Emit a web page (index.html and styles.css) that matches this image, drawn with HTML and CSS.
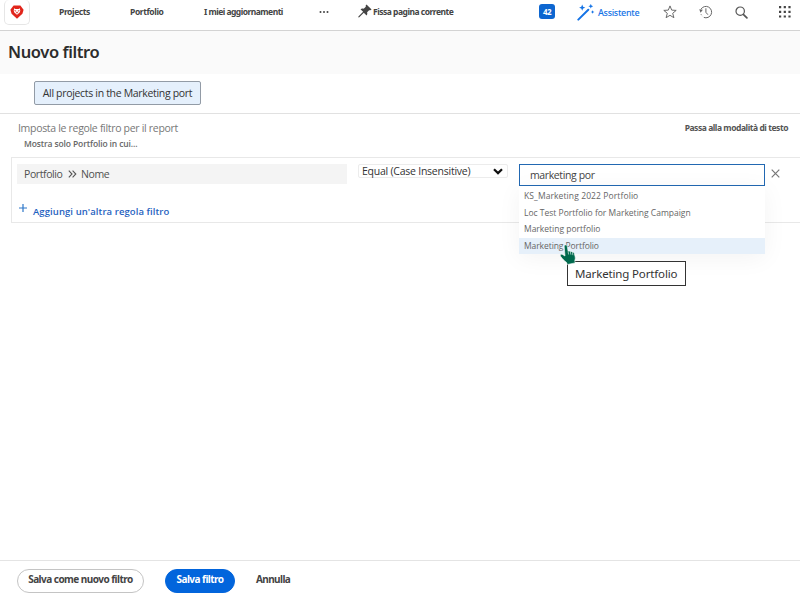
FILE: index.html
```html
<!DOCTYPE html>
<html lang="it">
<head>
    <meta charset="UTF-8">
    <meta name="viewport" content="width=device-width, initial-scale=1.0">
    <title>Nuovo filtro</title>
    <link rel="stylesheet" href="styles.css">
</head>
<body>
<div class="page">
    <header class="topbar">
        <div class="logo">
            <svg width="14" height="14" viewBox="0 0 14 14">
                <path d="M3.600.4h6.800L13.600 4.800 12.400 8.800 7 13.800 1.600 8.800.4 4.800z" fill="#e1251b"/>
                <path d="M4.200 3.200l1.200.7h3.200l1.200-.7.5 2.600-.8 2L7 9.700 4.500 7.800 3.700 5.800z" fill="#fff"/>
                <path d="M4.600 5.500l1.600.7M9.400 5.500l-1.600.7M5.900 8.200L7 7.300l1.100.9" stroke="#e1251b" stroke-width=".9" fill="none"/>
            </svg>
        </div>
        <nav class="links">
            <a class="projects">Projects</a>
            <a class="portfolio">Portfolio</a>
            <a class="updates">I miei aggiornamenti</a>
            <svg class="more" width="10" height="4" viewBox="0 0 10 4" fill="#444"><circle cx="1.500" cy="2" r="1"/><circle cx="5" cy="2" r="1"/><circle cx="8.500" cy="2" r="1"/></svg>
            <a class="pin">
                <svg width="14" height="14" viewBox="0 0 14 14" fill="#444"><path d="M8.500.4l5.100 5.100-1.300.8-1.200-.1-2 2.100c.4 1.300.2 2.300-.5 3.200L5.800 8.700 1 13.500l-.7-.2.1-.8 4.700-4.700L2.500 5.200c.9-.7 2-.9 3.200-.5l2.100-2-.1-1.300z"/></svg>
                <span>Fissa pagina corrente</span>
            </a>
        </nav>
        <div class="tools">
            <span class="badge">42</span>
            <a class="assistant">
                <svg width="18" height="17" viewBox="0 0 18 17" fill="#1473e6">
                    <path d="M1.300 15.600L11.300 5.700" stroke="#1473e6" stroke-width="2" stroke-linecap="round"/>
                    <path d="M5.200.6l.9 2.200 2.200.9-2.200.9-.9 2.200-.9-2.200-2.200-.9 2.200-.9zM13.800-.2l.7 1.700 1.700.7-1.700.7-.7 1.700-.7-1.700-1.700-.7 1.700-.7zM15.600 6.200l.6 1.200 1.200.6-1.200.6-.6 1.200-.6-1.200-1.200-.6 1.200-.6z"/>
                </svg>
                <span>Assistente</span>
            </a>
            <svg class="star" width="14" height="14" viewBox="0 0 14 14" fill="none" stroke="#6a6a6a"><path d="M7 .9l1.700 4.200 4.500.3-3.500 2.900 1.200 4.400L7 10.300l-3.900 2.400 1.200-4.400L.8 5.400l4.500-.3z" stroke-linejoin="round"/></svg>
            <svg class="history" width="14" height="14" viewBox="0 0 14 14" fill="none" stroke="#666"><path d="M2 4.200A5.700 5.700 0 1 1 4.800 12.400M6.900 3.300v4l2 2.400"/><path d="M.3 4.300l3.600.5L1.500 7.800z" fill="#666" stroke="none"/><path d="M2 9.300l1.200 1.800" stroke-dasharray="1 1"/></svg>
            <svg class="search" width="13" height="13" viewBox="0 0 13 13" fill="none" stroke="#555" stroke-width="1.200"><circle cx="5.200" cy="5.200" r="4.200"/><path d="M8.300 8.300l3.600 3.600" stroke-width="1.700" stroke-linecap="round"/></svg>
            <svg class="apps" width="12" height="12" viewBox="0 0 12 12" fill="#444">
                <path d="M0 0h2.200v2.200H0zM4.700 0h2.200v2.200H4.700zM9.400 0h2.200v2.200H9.400zM0 4.700h2.200v2.200H0zM4.700 4.700h2.200v2.200H4.700zM9.400 4.700h2.200v2.200H9.400zM0 9.400h2.200v2.200H0zM4.700 9.400h2.200v2.200H4.700zM9.400 9.400h2.200v2.200H9.400z"/>
            </svg>
        </div>
    </header>

    <h1 class="title"><span>Nuovo filtro</span></h1>

    <div class="tabs">
        <button class="tab"><span>All projects in the Marketing port</span></button>
    </div>

    <main class="content">
        <div class="intro">
            <div>
                <div class="heading"><span>Imposta le regole filtro per il report</span></div>
                <div class="subheading"><span>Mostra solo Portfolio in cui...</span></div>
            </div>
            <a class="text-mode">Passa alla modalità di testo</a>
        </div>

        <section class="rules">
            <div class="rule">
                <div class="field">
                    <span class="field-object">Portfolio</span>
                    <svg width="9" height="8" viewBox="0 0 9 8" fill="none" stroke="#555" stroke-width="1.100"><path d="M.8.700L4 4 .8 7.300M4.600.700L7.800 4 4.600 7.300"/></svg>
                    <span class="field-name">Nome</span>
                </div>
                <div class="operator">
                    <span>Equal (Case Insensitive)</span>
                    <svg width="10" height="7" viewBox="0 0 10 7" fill="none" stroke="#111" stroke-width="2.200"><path d="M1 1.200l4 3.900 4-3.900"/></svg>
                </div>
                <div class="value">
                    <div class="value-input"><span>marketing por</span></div>
                    <ul class="suggestions">
                        <li class="wide"><span>KS_Marketing 2022 Portfolio</span></li>
                        <li><span>Loc Test Portfolio for Marketing Campaign</span></li>
                        <li><span>Marketing portfolio</span></li>
                        <li class="selected"><span>Marketing Portfolio</span></li>
                    </ul>
                    <div class="tooltip"><span>Marketing Portfolio</span></div>
                    <svg class="cursor" width="17" height="21" viewBox="0 0 17 21"><path d="M5 1.100C6 .6 7 1.100 7.200 2.200l.9 5.100c.9-.7 1.800-.4 2.200.4.900-.5 1.700-.1 2 .7.900-.3 1.800.1 2 1l.9 3.600c.3 1.300 0 2.500-.4 3.400l.3 2.500-7.600 1.600-1.100-2.200c-1.900-1.200-4-3.600-5.700-5.800-.9-1.300 0-2.600 1.400-2.200l2.900 1.700L4.200 2.700c-.1-.7.200-1.300.8-1.600z" fill="#00694d" stroke="#fff" stroke-width=".6"/><path d="M8.100 7.500l.5 3M10.400 8l.5 2.700M12.500 9l.4 2.200" stroke="#d6ebe4" stroke-width=".7"/></svg>
                </div>
                <svg class="remove" width="9" height="9" viewBox="0 0 9 9" stroke="#777" stroke-width="1.200"><path d="M.7.700l7.600 7.600M8.300.700L.7 8.300"/></svg>
            </div>
            <a class="add-rule">
                <svg width="8" height="8" viewBox="0 0 8 8" stroke="#2d77c9" stroke-width="1.200"><path d="M4 0v8M0 4h8"/></svg>
                <span>Aggiungi un'altra regola filtro</span>
            </a>
        </section>
    </main>

    <footer class="footer">
        <button class="btn save-new"><span>Salva come nuovo filtro</span></button>
        <button class="btn save"><span>Salva filtro</span></button>
        <a class="cancel">Annulla</a>
    </footer>
</div>
</body>
</html>
```
FILE: styles.css
```css
* {
    box-sizing: border-box;
}
body {
    margin: 0;
    font-family: "Noto Sans", sans-serif;
    color: #444;
    background: #fff;
}
button {
    font-family: inherit;
    padding: 0;
}
svg {
    flex: none;
}
.page {
    display: flex;
    flex-direction: column;
    height: 599px;
    overflow: hidden;
}

/* top bar */
.topbar {
    display: flex;
    align-items: flex-start;
    height: 31px;
    padding: 0 9px 0 4px;
    border-bottom: 1px solid #d3d3d3;
    font-size: 8.5px;
    font-weight: 700;
    line-height: 12px;
    white-space: nowrap;
}
.logo {
    display: flex;
    justify-content: center;
    align-items: center;
    width: 26px;
    height: 25px;
    border: 1px solid #e6e6e6;
    border-top: none;
    border-radius: 5px;
}
.links {
    display: flex;
    padding-top: 6px;
}
.projects {
    width: 71px;
    margin-left: 29px;
    letter-spacing: -0.4px;
}
.portfolio {
    width: 74px;
    letter-spacing: -0.4px;
}
.updates {
    width: 115px;
    letter-spacing: -0.53px;
}
.more {
    margin-top: 4px;
}
.pin {
    display: flex;
    gap: 1px;
    margin-left: 29px;
    letter-spacing: -0.5px;
}
.pin svg {
    margin-top: -2px;
}
.tools {
    display: flex;
    margin-left: auto;
}
.badge {
    width: 16px;
    height: 15px;
    margin-top: 4px;
    border-radius: 3px;
    background: #0d66d0;
    color: #fff;
    font-size: 8px;
    line-height: 15px;
    letter-spacing: -0.5px;
    text-align: center;
}
.assistant {
    display: flex;
    gap: 3px;
    margin: 4px 23px 0 22px;
    color: #1473e6;
    font-weight: 500;
    font-size: 9px;
    letter-spacing: -0.3px;
}
.assistant span {
    margin-top: 3px;
    width: 42px;
}
.star,
.history {
    margin-top: 5px;
}
.history {
    margin-left: 22px;
}
.search {
    margin: 6px 0 0 22px;
}
.apps {
    margin: 6px 0 0 31px;
}

.title {
    height: 43px;
    margin: 0;
    padding: 9px 8px;
    background: #fafafa;
    color: #2c2c2c;
    font-size: 16.5px;
    font-weight: 600;
    line-height: 24px;
    letter-spacing: -0.4px;
}
.tabs {
    height: 40px;
    padding: 7px 34px;
    border-bottom: 1px solid #e1e1e1;
}
.tab {
    display: block;
    width: 167px;
    height: 24px;
    border: 1px solid #929ba6;
    border-radius: 2px;
    background: #e5f0fc;
    color: #333;
    font-family: "Open Sans", sans-serif;
    font-size: 10.5px;
    letter-spacing: -0.32px;
    white-space: nowrap;
}

/* filter rules */
.content {
    flex: 1;
    font-family: "Open Sans", sans-serif;
}
.intro {
    display: flex;
    justify-content: space-between;
    height: 43px;
    padding: 6px 12px 0 18px;
    white-space: nowrap;
}
.heading {
    color: #777;
    font-size: 10.5px;
    line-height: 16px;
    letter-spacing: -0.31px;
}
.subheading {
    padding: 2px 0 0 6px;
    color: #666;
    font-size: 8.5px;
    font-weight: 600;
    line-height: 12px;
    letter-spacing: -0.12px;
}
.text-mode {
    padding-top: 2px;
    color: #555;
    font-family: "Noto Sans", sans-serif;
    font-size: 8.5px;
    font-weight: 700;
    line-height: 12px;
    letter-spacing: -0.45px;
}
.rules {
    height: 66px;
    margin-left: 11px;
    border: 1px solid #e8e8e8;
    border-right: none;
}
.rule {
    display: flex;
    height: 43px;
    padding: 6px 0 0 5px;
    font-size: 10.5px;
    white-space: nowrap;
}
.field {
    display: flex;
    align-items: center;
    width: 330px;
    height: 20px;
    padding-left: 7px;
    background: #f4f4f4;
    color: #505050;
    line-height: 18px;
    letter-spacing: -0.4px;
}
.field-object {
    width: 44px;
}
.field-name {
    margin-left: 4px;
}
.operator {
    display: flex;
    align-items: center;
    justify-content: space-between;
    width: 150px;
    height: 14px;
    margin: 0 11px;
    padding: 0 4px 0 3px;
    border: 1px solid #ececec;
    border-radius: 2px;
    color: #333;
    letter-spacing: -0.24px;
}
.value {
    position: relative;
    width: 246px;
}
.value-input {
    height: 22px;
    padding-left: 10px;
    border: 1px solid #2268b2;
    color: #444;
    line-height: 20px;
    letter-spacing: -0.38px;
}
.suggestions {
    position: absolute;
    top: 22px;
    left: 0;
    width: 246px;
    height: 68px;
    margin: 0;
    padding: 2px 0 0;
    list-style: none;
    background: #fff;
    box-shadow: 0 4px 24px rgba(0, 0, 0, 0.05);
    color: #666;
    font-size: 8.5px;
}
.suggestions li {
    height: 16.5px;
    padding-left: 5px;
    line-height: 16px;
}
.suggestions .wide {
    letter-spacing: 0.1px;
}
.suggestions .selected {
    background: #e6f0fa;
    letter-spacing: -0.08px;
}
.tooltip {
    position: absolute;
    top: 97px;
    left: 48px;
    width: 119px;
    height: 25px;
    padding-left: 7px;
    border: 1px solid #333;
    background: #fff;
    color: #333;
    font-family: "Noto Sans", sans-serif;
    font-size: 11.5px;
    line-height: 23px;
    letter-spacing: -0.15px;
}
.cursor {
    position: absolute;
    top: 80px;
    left: 41px;
}
.remove {
    margin: 5px 0 0 6px;
}
.add-rule {
    display: flex;
    gap: 6px;
    margin-left: 7px;
    color: #1f62c0;
    font-size: 9.5px;
    font-weight: 600;
    line-height: 14px;
    letter-spacing: 0.08px;
}
.add-rule svg {
    margin-top: 3px;
}
.add-rule span {
    margin-top: 4px;
}

/* bottom buttons */
.footer {
    display: flex;
    height: 39px;
    padding: 8px 17px;
    border-top: 1px solid #e4e4e4;
    font-size: 10px;
    font-weight: 700;
    white-space: nowrap;
}
.btn {
    height: 24px;
    padding-bottom: 4px;
    border: 1px solid #c4c4c4;
    border-radius: 12px;
    background: #fff;
    color: #444;
    font-size: 10px;
    font-weight: 700;
    letter-spacing: -0.53px;
}
.save-new {
    width: 127px;
}
.save {
    width: 70px;
    margin: 0 21px;
    border-color: #0265dc;
    background: #0265dc;
    color: #fff;
}
.cancel {
    line-height: 21px;
    letter-spacing: -0.6px;
}
```
